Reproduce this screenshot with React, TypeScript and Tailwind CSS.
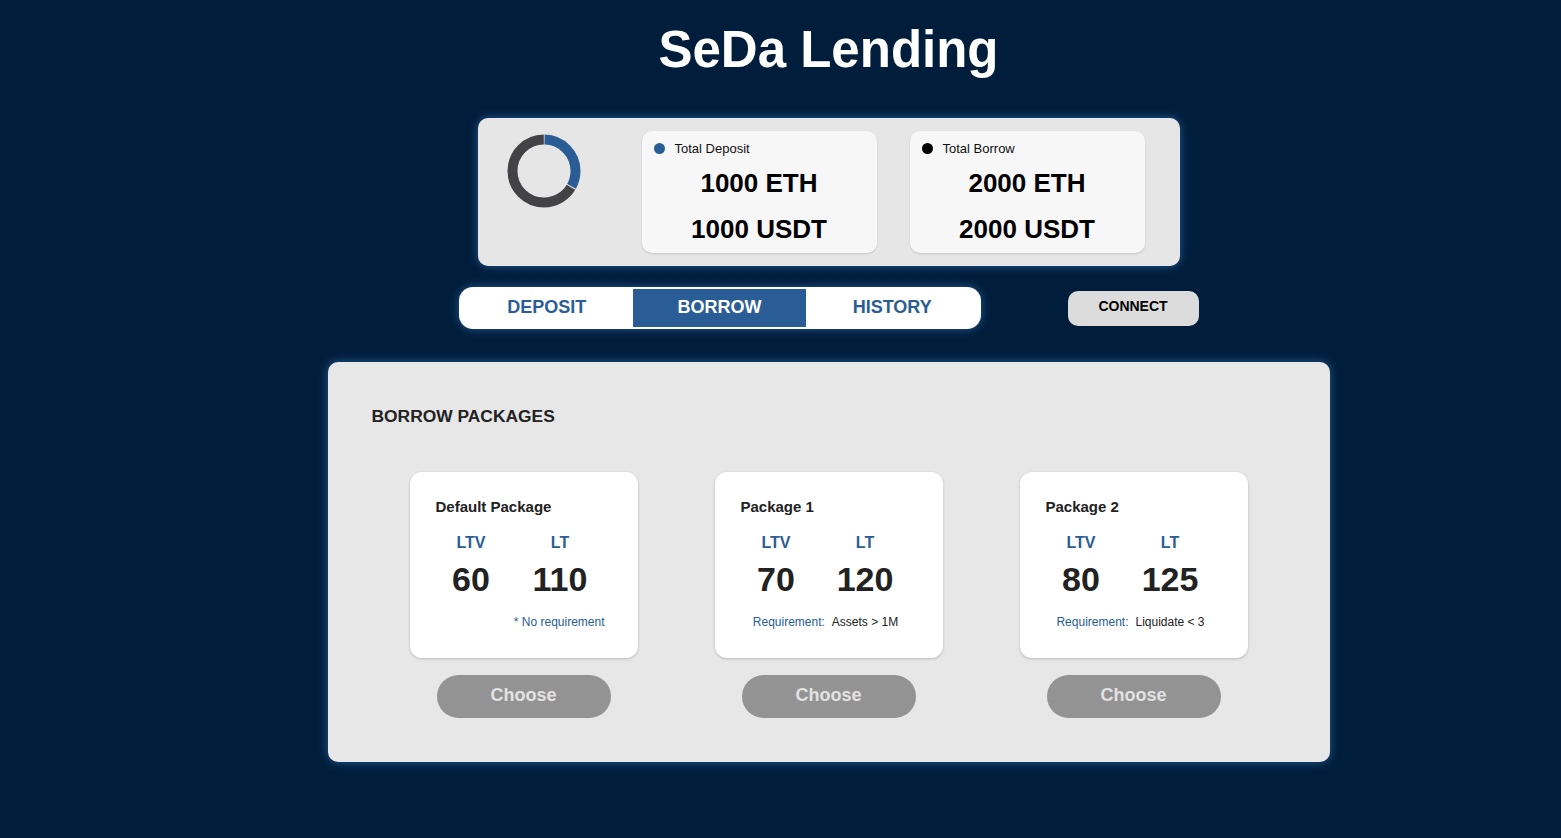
const FONT = { fontFamily: '"Liberation Sans", Arial, sans-serif' };

type Pkg = {
  name: string;
  ltv: number;
  lt: number;
  req?: string;
};

const packages: Pkg[] = [
  { name: "Default Package", ltv: 60, lt: 110 },
  { name: "Package 1", ltv: 70, lt: 120, req: "Assets > 1M" },
  { name: "Package 2", ltv: 80, lt: 125, req: "Liquidate < 3" },
];

function Donut() {
  const r = 31.5;
  const c = 2 * Math.PI * r;
  const blue = c / 3;
  return (
    <svg width="80" height="80" viewBox="0 0 80 80" className="shrink-0">
      <g transform="rotate(-90 40 40)">
        <circle cx="40" cy="40" r={r} fill="none" stroke="#f2f2f2" strokeWidth="10" />
        <circle cx="40" cy="40" r={r} fill="none" stroke="#434347" strokeWidth="10"
          strokeDasharray={`${c - blue - 1} ${blue + 1}`} strokeDashoffset={-(blue + 0.5)} />
        <circle cx="40" cy="40" r={r} fill="none" stroke="#2a5d95" strokeWidth="10"
          strokeDasharray={`${blue - 1} ${c - blue + 1}`} strokeDashoffset={-0.5} />
      </g>
    </svg>
  );
}

function StatCard({ label, dot, lines }: { label: string; dot: string; lines: string[] }) {
  return (
    <div className="w-[235px] h-[122px] rounded-[10px] bg-[#f7f7f7] shadow-[0_1px_2px_rgba(0,0,0,0.15)] pt-[10px]">
      <div className="flex items-center gap-[10px] pl-[12px] h-[15px]">
        <span className={`inline-block w-[11px] h-[11px] rounded-full ${dot}`} />
        <span className="text-[13px] leading-[15px] text-[#111]">{label}</span>
      </div>
      <div className="mt-[12px] flex flex-col items-center gap-[16px]">
        {lines.map((l) => (
          <div key={l} className="text-[26px] leading-[30px] font-bold text-black">{l}</div>
        ))}
      </div>
    </div>
  );
}

function PackageCard({ p }: { p: Pkg }) {
  return (
    <div className="flex flex-col items-center">
      <div className="w-[228px] h-[186px] rounded-[12px] bg-white shadow-[0_1px_3px_rgba(0,0,0,0.2)] pt-[26px]">
        <div className="pl-[26px] text-[15px] leading-[18px] font-bold text-[#222]">{p.name}</div>
        <div className="flex pl-[17px] mt-[17px]">
          {[["LTV", p.ltv], ["LT", p.lt]].map(([k, v]) => (
            <div key={k} className="w-[89px] flex flex-col items-center">
              <div className="text-[16px] leading-[20px] font-bold text-[#2a5d95]">{k}</div>
              <div className="mt-[7px] text-[34px] leading-[38px] font-bold text-[#222]">{v}</div>
            </div>
          ))}
        </div>
        {p.req ? (
          <div className="mt-[17px] flex justify-center gap-[7px] text-[12px] leading-[14px] pr-[6px]">
            <span className="text-[#2a5d95]">Requirement:</span>
            <span className="text-[#222]">{p.req}</span>
          </div>
        ) : (
          <div className="mt-[17px] flex justify-end pr-[33px] text-[12px] leading-[14px] text-[#2a5d95]">
            * No requirement
          </div>
        )}
      </div>
      <button className="mt-[17px] w-[174px] h-[43px] rounded-full bg-[#939393] text-[18px] font-bold text-[#e2e2e2] pb-[2px]">
        Choose
      </button>
    </div>
  );
}

export default function App() {
  const tabs = ["DEPOSIT", "BORROW", "HISTORY"];
  return (
    <div style={FONT} className="min-h-[838px] w-full bg-[#001e3c] pl-[96px] pb-[76px]">
      <div className="flex flex-col items-center">
        <h1 className="pt-[20px] text-[51px] leading-[60px] font-bold text-white">SeDa Lending</h1>

        <div className="mt-[38px] w-[702px] h-[148px] rounded-[10px] bg-[#e6e6e6] shadow-[0_0_8px_rgba(70,140,220,0.55)] flex items-start pl-[26px] pt-[13px]">
          <Donut />
          <div className="ml-[58px] flex gap-[33px]">
            <StatCard label="Total Deposit" dot="bg-[#2a5d95]" lines={["1000 ETH", "1000 USDT"]} />
            <StatCard label="Total Borrow" dot="bg-black" lines={["2000 ETH", "2000 USDT"]} />
          </div>
        </div>

        <div className="mt-[21px] flex items-center gap-[87px]">
          <div className="w-[522px] h-[42px] rounded-[14px] bg-white p-[2px] flex shadow-[0_0_8px_rgba(70,140,220,0.55)]">
            {tabs.map((t) => (
              <div
                key={t}
                className={`flex-1 flex items-center justify-center pb-[2px] text-[18px] font-bold ${
                  t === "BORROW" ? "bg-[#2a5d95] text-white" : "text-[#2a5d95]"
                }`}
              >
                {t}
              </div>
            ))}
          </div>
          <button className="w-[131px] h-[35px] rounded-[10px] bg-[#dcdcdc] pb-[3px] text-[14px] font-bold text-black">
            CONNECT
          </button>
        </div>

        <div className="mt-[33px] w-[1002px] h-[400px] rounded-[10px] bg-[#e7e7e7] shadow-[0_0_10px_rgba(70,140,220,0.55)] pt-[44px]">
          <div className="pl-[44px] text-[17.4px] leading-[20px] font-bold text-[#222]">BORROW PACKAGES</div>
          <div className="mt-[46px] flex justify-center gap-[77px]">
            {packages.map((p) => (
              <PackageCard key={p.name} p={p} />
            ))}
          </div>
        </div>
      </div>
    </div>
  );
}
